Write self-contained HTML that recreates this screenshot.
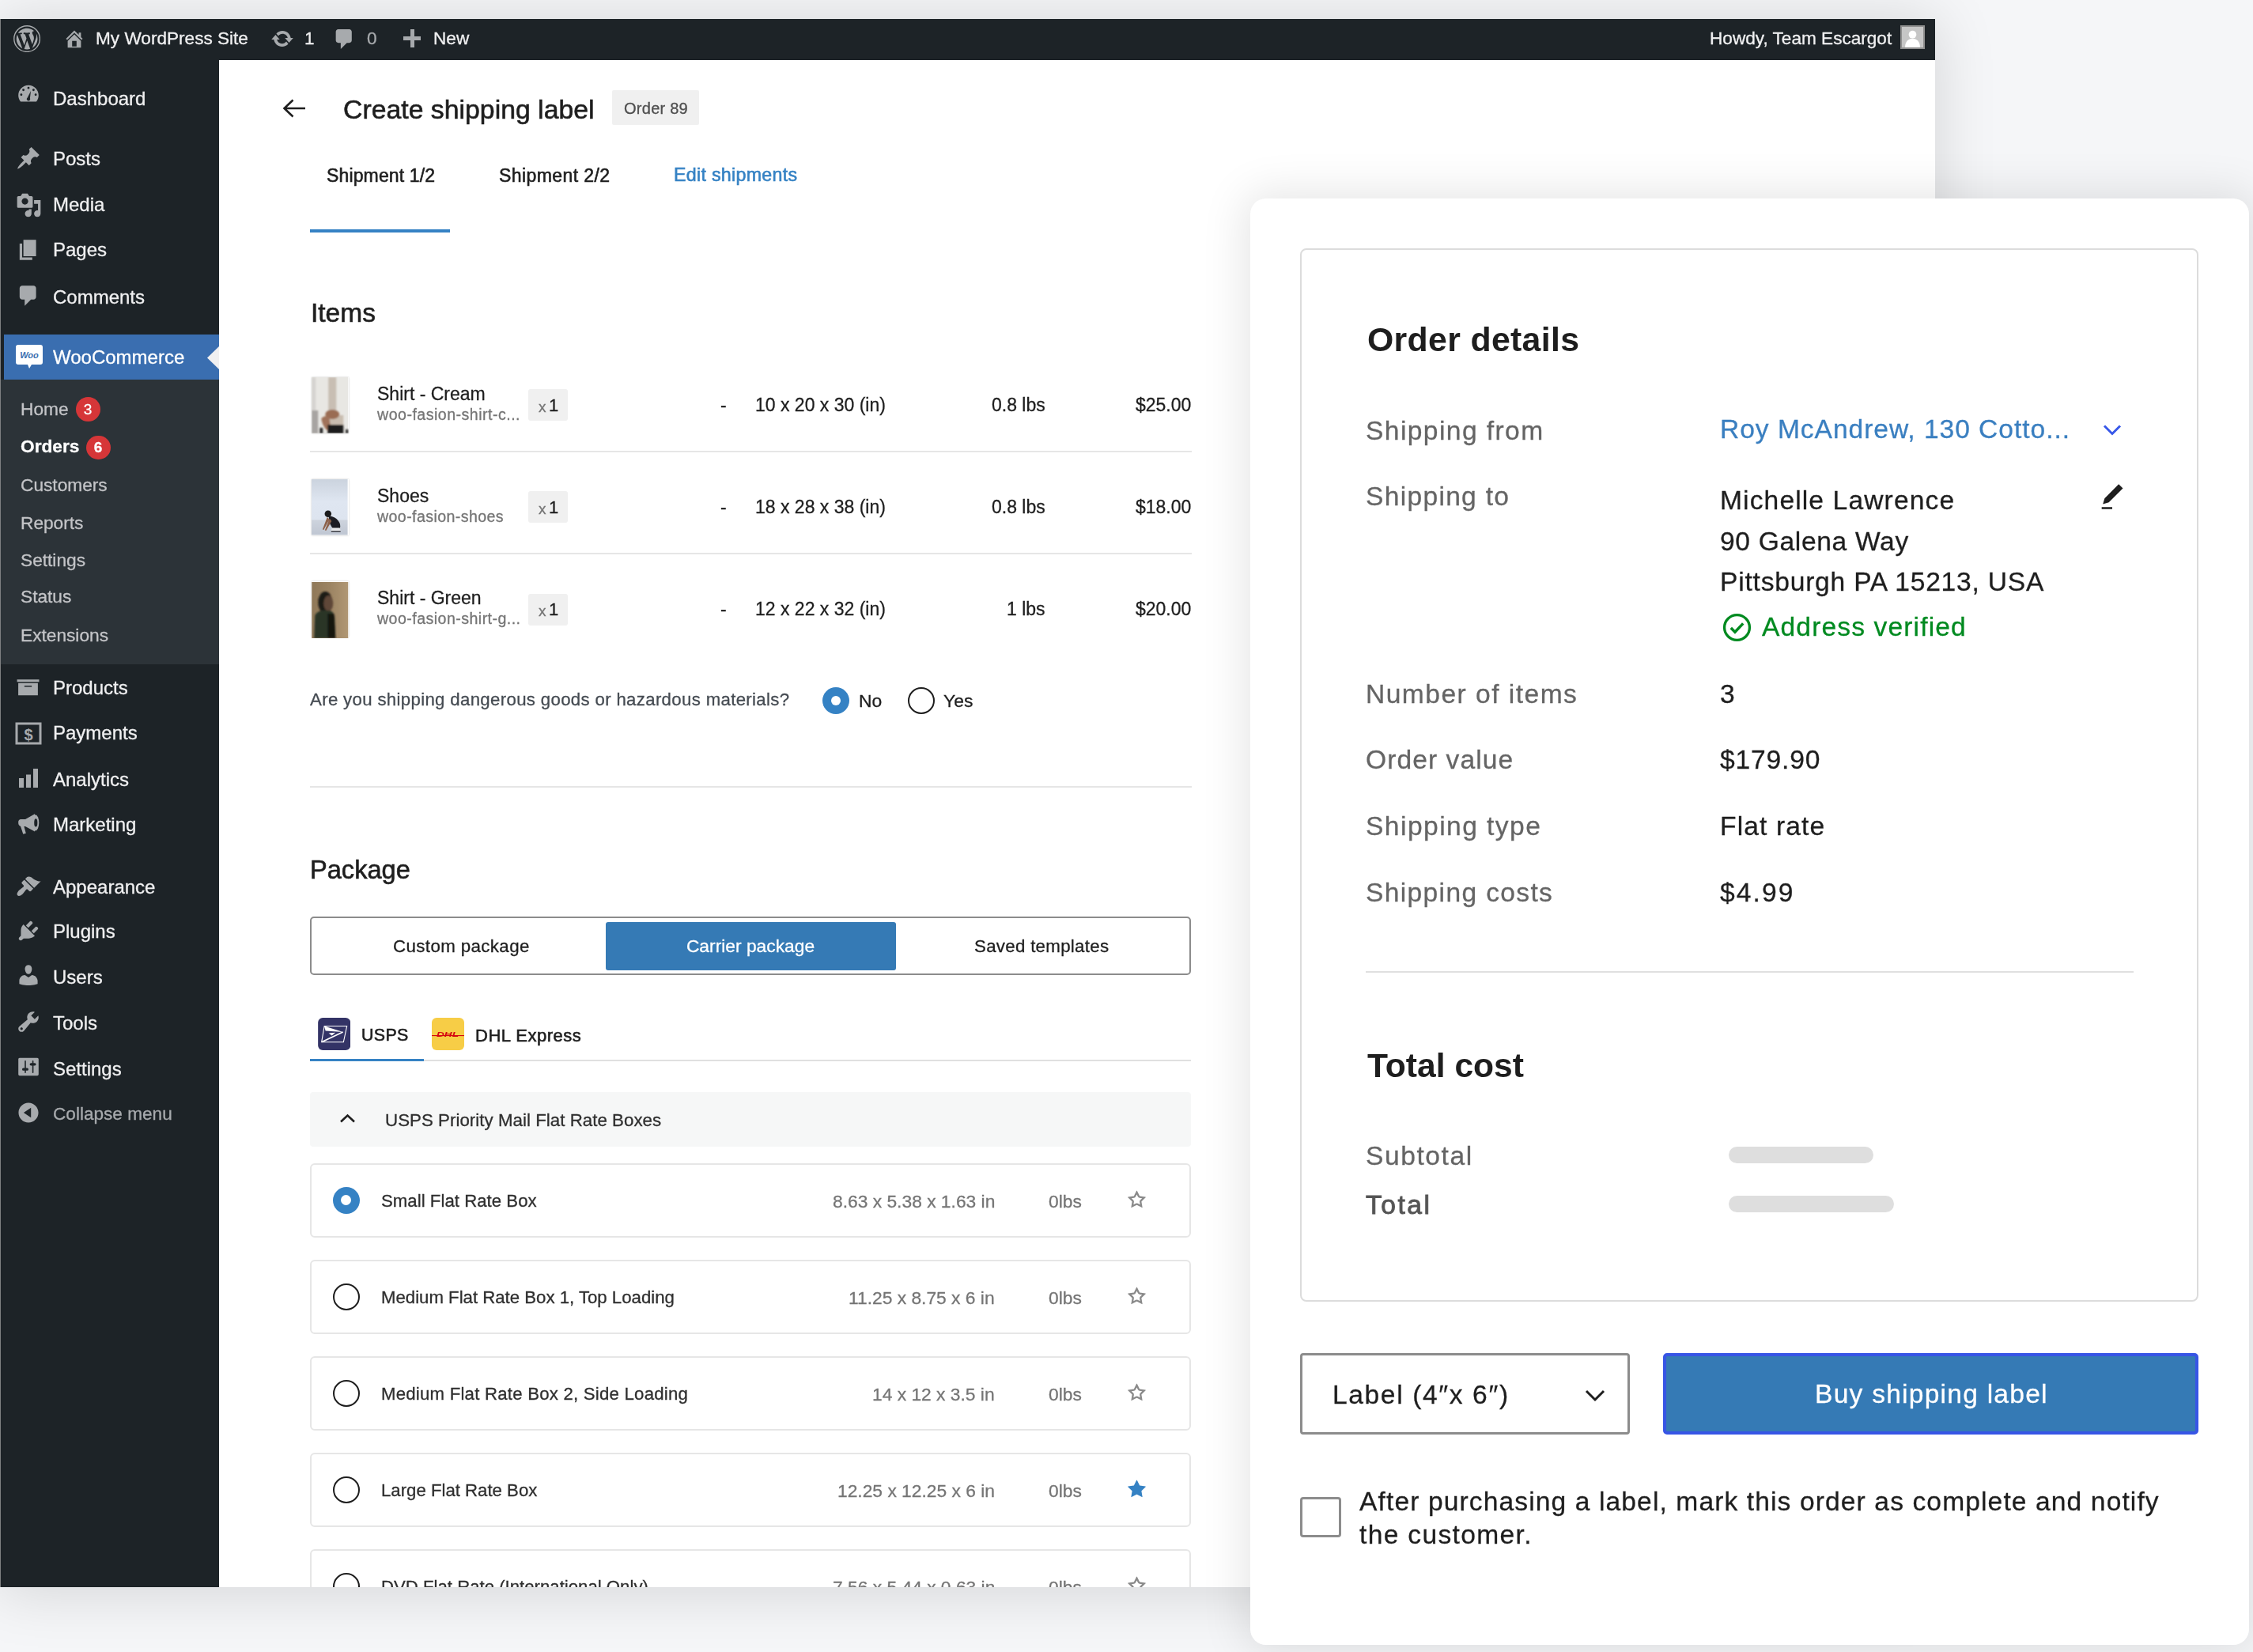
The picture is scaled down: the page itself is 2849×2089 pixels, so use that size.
<!DOCTYPE html>
<html><head><meta charset="utf-8"><title>Create shipping label</title>
<style>
html,body{margin:0;padding:0;}
body{width:2849px;height:2089px;overflow:hidden;position:relative;background:#f5f6f8;font-family:"Liberation Sans",sans-serif;-webkit-font-smoothing:antialiased;}
.r{position:absolute;}
.t{position:absolute;line-height:1;white-space:nowrap;will-change:transform;-webkit-text-stroke:0.3px currentColor;}
.md{-webkit-text-stroke:0.6px currentColor;}
.sb{-webkit-text-stroke:0.9px currentColor;}
.nb{-webkit-text-stroke:0;}
</style></head><body>
<div class="r" style="left:1.0px;top:24.0px;width:2446.0px;height:1983.0px;background:#fff;box-shadow:0 4px 70px 4px rgba(0,0,0,0.13);"></div>
<div class="r" style="left:0.0px;top:24.0px;width:1.0px;height:1983.0px;background:#7d7f80;"></div>
<div class="r" style="left:1.0px;top:24.0px;width:2446.0px;height:52.0px;background:#1d2327;"></div>
<div class="r" style="left:1.0px;top:76.0px;width:276.0px;height:1931.0px;background:#1d2327;"></div>
<svg class="r" style="left:17.0px;top:31.6px;" width="34.2" height="34.2" viewBox="0 0 20 20"><circle cx="10" cy="10" r="9.55" fill="none" stroke="#a7aaad" stroke-width="0.8"/><path transform="translate(10 10) scale(0.88) translate(-10 -10)" d="M7.78 15.37L4.37 6.22c.55-.02 1.17-.08 1.17-.08.5-.06.44-1.13-.06-1.11 0 0-1.45.11-2.37.11-.18 0-.37 0-.58-.01C4.12 2.69 6.87 1.11 10 1.11c2.33 0 4.45.87 6.05 2.34-.68-.11-1.65.39-1.65 1.58 0 .74.45 1.36.9 2.1.35.61.55 1.36.55 2.46 0 1.49-1.4 5-1.4 5l-3.030-8.37c.54-.02.82-.17.82-.17.5-.05.44-1.25-.06-1.22 0 0-1.44.12-2.38.12-.87 0-2.33-.12-2.33-.12-.5-.03-.56 1.2-.06 1.22l.92.08 1.26 3.41zM17.41 10c.24-.64.74-1.87.43-4.25.7 1.29 1.05 2.71 1.05 4.25 0 3.29-1.73 6.24-4.4 7.78.97-2.59 1.94-5.2 2.92-7.78zM6.1 18.09C3.12 16.65 1.11 13.53 1.11 10c0-1.3.23-2.48.72-3.59C3.25 10.3 4.67 14.2 6.1 18.090zm4.03-6.63l2.58 6.98c-.86.29-1.76.45-2.71.45-.79 0-1.57-.11-2.29-.33.81-2.38 1.62-4.74 2.42-7.1z" fill="#a7aaad"/></svg>
<svg class="r" style="left:80.0px;top:35.0px;" width="28" height="28" viewBox="0 0 20 20"><path d="M16 8.5l1.53 1.53-1.06 1.06L10 4.62l-6.47 6.47-1.06-1.06L10 2.5l4 4v-2h2v4zm-6-2.46l6 5.99V18H4v-5.97zM12 17v-5H8v5h4z" fill="#a7aaad"/></svg>
<div class="t " style="top:38.2px;font-size:22.6px;color:#f0f0f1;left:120.5px;">My WordPress Site</div>
<svg class="r" style="left:341.0px;top:34.0px;" width="32" height="30" viewBox="0 0 20 20"><path d="M10.2 3.28c3.53 0 6.43 2.61 6.92 6h2.08l-3.5 4-3.5-4h2.32c-.45-1.97-2.21-3.45-4.32-3.45-1.450 0-2.73.71-3.54 1.78L4.95 5.66C6.23 4.2 8.11 3.28 10.2 3.28zm-.4 13.44c-3.52 0-6.43-2.610-6.92-6H.8l3.5-4c1.17 1.33 2.33 2.67 3.5 4H5.48c.45 1.97 2.21 3.45 4.32 3.45 1.45 0 2.73-.71 3.54-1.78l1.71 1.95c-1.28 1.46-3.15 2.38-5.25 2.38z" fill="#a7aaad"/></svg>
<div class="t " style="top:37.9px;font-size:22.6px;color:#f0f0f1;left:384.5px;">1</div>
<svg class="r" style="left:420.0px;top:34.0px;" width="31" height="31" viewBox="0 0 20 20"><path d="M5 2h9c1.1 0 2 .9 2 2v7c0 1.1-.9 2-2 2h-2l-5 5v-5H5c-1.1 0-2-.9-2-2V4c0-1.1.9-2 2-2z" fill="#a7aaad"/></svg>
<div class="t " style="top:37.9px;font-size:22.6px;color:#a7aaad;left:463.5px;">0</div>
<div class="r" style="left:518.5px;top:37.3px;width:5.0px;height:22.7px;background:#a7aaad;"></div>
<div class="r" style="left:509.5px;top:46.2px;width:22.5px;height:5.0px;background:#a7aaad;"></div>
<div class="t " style="top:37.9px;font-size:22.6px;color:#f0f0f1;left:547.9px;">New</div>
<div class="t " style="top:38.1px;font-size:22.6px;color:#f0f0f1;right:457.0px;">Howdy, Team Escargot</div>
<div class="r" style="left:2402.5px;top:31.6px;width:31.5px;height:30.9px;background:#c6c6c6;box-shadow:inset 0 0 0 2px #8f8f8f;"></div>
<svg class="r" style="left:2405.0px;top:34.0px;" width="27" height="27" viewBox="0 0 20 20"><circle cx="10" cy="7.2" r="3.6" fill="#fff"/><path d="M3 19c0-5 3-8 7-8s7 3 7 8z" fill="#fff"/></svg>
<svg class="r" style="left:20.0px;top:103.0px;" width="32" height="32" viewBox="0 0 20 20"><path fill-rule="evenodd" d="M3.76 16h12.48c1.1-1.37 1.76-3.11 1.76-5 0-4.42-3.58-8-8-8s-8 3.58-8 8c0 1.89.66 3.63 1.76 5zM10 4.2a.9.9 0 1 1 0 1.8a.9.9 0 1 1 0-1.8zM6 5.8a.9.9 0 1 1 0 1.8a.9.9 0 1 1 0-1.8zM14 5.8a.9.9 0 1 1 0 1.8a.9.9 0 1 1 0-1.8zM4.3 9.6a.9.9 0 1 1 0 1.8a.9.9 0 1 1 0-1.8zM15.7 9.6a.9.9 0 1 1 0 1.8a.9.9 0 1 1 0-1.8zM11.9 7.5L11.2 13.2c.3.6.2 1.5-.5 1.9-.8.4-1.7.1-2-.7-.2-.6 0-1.2.5-1.6z" fill="#a7aaad"/></svg>
<div class="t " style="top:113.3px;font-size:24px;color:#f0f0f1;left:67.0px;">Dashboard</div>
<svg class="r" style="left:20.0px;top:184.0px;" width="32" height="32" viewBox="0 0 20 20"><path d="M10.44 3.02l1.82-1.82 6.36 6.35-1.83 1.82c-1.05-.68-2.48-.57-3.41.36l-.75.75c-.92.93-1.04 2.35-.35 3.41l-1.83 1.82-2.41-2.41-2.8 2.79c-.42.42-3.38 2.71-3.8 2.29s1.86-3.39 2.28-3.81l2.79-2.79L4.1 9.36l1.83-1.820c1.05.69 2.48.57 3.4-.36l.75-.75c.93-.92 1.05-2.35.36-3.41z" fill="#a7aaad"/></svg>
<div class="t " style="top:188.5px;font-size:24px;color:#f0f0f1;left:67.0px;">Posts</div>
<svg class="r" style="left:20.0px;top:243.0px;" width="33" height="33" viewBox="0 0 20 20"><path d="M13 11V4c0-.55-.45-1-1-1h-1.67L9 1H5L3.67 3H2c-.55 0-1 .45-1 1v7c0 .55.45 1 1 1h10c.55 0 1-.45 1-1zM7 4.5c1.38 0 2.5 1.12 2.5 2.5S8.38 9.5 7 9.5 4.5 8.38 4.5 7 5.62 4.5 7 4.5zM14 6h5v10.5c0 1.38-1.12 2.5-2.5 2.5S14 17.88 14 16.5s1.12-2.5 2.5-2.5c.17 0 .34.02.5.05V9h-3V6zm-4 8.05V13h2v3.5c0 1.38-1.12 2.5-2.5 2.5S7 17.88 7 16.5 8.12 14 9.5 14c.17 0 .34.02.5.05z" fill="#a7aaad" fill-rule="evenodd"/></svg>
<div class="t " style="top:246.7px;font-size:24px;color:#f0f0f1;left:67.0px;">Media</div>
<svg class="r" style="left:20.0px;top:300.0px;" width="32" height="32" viewBox="0 0 20 20"><path d="M6 15V2h10v13H6zm-1 1h8v2H3V5h2v11z" fill="#a7aaad"/></svg>
<div class="t " style="top:304.4px;font-size:24px;color:#f0f0f1;left:67.0px;">Pages</div>
<svg class="r" style="left:20.0px;top:358.0px;" width="32" height="32" viewBox="0 0 20 20"><path d="M5 2h9c1.1 0 2 .9 2 2v7c0 1.1-.9 2-2 2h-2l-5 5v-5H5c-1.1 0-2-.9-2-2V4c0-1.1.9-2 2-2z" fill="#a7aaad"/></svg>
<div class="t " style="top:363.5px;font-size:24px;color:#f0f0f1;left:67.0px;">Comments</div>
<div class="r" style="left:5.0px;top:423.0px;width:272.0px;height:57.0px;background:#3a6eb0;"></div>
<svg class="r" style="left:262.0px;top:438.0px;" width="15" height="29" viewBox="0 0 15 29"><path d="M15 0L0 14.5 15 29z" fill="#f0f0f1"/></svg>
<svg class="r" style="left:19.0px;top:434.0px;" width="36" height="36" viewBox="0 0 36 36"><path d="M4 2h28a3 3 0 0 1 3 3v19a3 3 0 0 1-3 3H21l-3 5-2-5H4a3 3 0 0 1-3-3V5a3 3 0 0 1 3-3z" fill="#fff"/><text x="18" y="19" font-family="Liberation Sans" font-weight="700" font-style="italic" font-size="11" fill="#3a6eb0" text-anchor="middle">Woo</text></svg>
<div class="t " style="top:439.7px;font-size:24px;color:#ffffff;left:67.0px;">WooCommerce</div>
<div class="r" style="left:1.0px;top:480.0px;width:276.0px;height:360.0px;background:#2c3338;"></div>
<div class="t " style="top:505.6px;font-size:22.7px;color:#c3c4c7;left:26.4px;">Home</div>
<div class="r" style="left:96.0px;top:502.0px;width:30.7px;height:31.0px;background:#d63638;border-radius:16px;"></div>
<div class="t " style="top:508.4px;font-size:19px;color:#fff;left:-888.6px;width:2000px;text-align:center;">3</div>
<div class="t " style="top:553.3px;font-size:22.7px;color:#ffffff;font-weight:700;left:26.4px;">Orders</div>
<div class="r" style="left:109.0px;top:550.7px;width:30.5px;height:30.3px;background:#d63638;border-radius:16px;"></div>
<div class="t " style="top:556.4px;font-size:19px;color:#fff;font-weight:700;left:-875.7px;width:2000px;text-align:center;">6</div>
<div class="t " style="top:601.5px;font-size:22.7px;color:#c3c4c7;left:26.4px;">Customers</div>
<div class="t " style="top:649.8px;font-size:22.7px;color:#c3c4c7;left:26.4px;">Reports</div>
<div class="t " style="top:696.8px;font-size:22.7px;color:#c3c4c7;left:26.4px;">Settings</div>
<div class="t " style="top:743.2px;font-size:22.7px;color:#c3c4c7;left:26.4px;">Status</div>
<div class="t " style="top:791.8px;font-size:22.7px;color:#c3c4c7;left:26.4px;">Extensions</div>
<svg class="r" style="left:20.0px;top:853.0px;" width="31" height="31" viewBox="0 0 20 20"><path d="M19 4v2H1V4h18zM2 7h16v10H2V7zm11 3V9H7v1h6z" fill="#a7aaad"/></svg>
<div class="t " style="top:857.7px;font-size:24px;color:#f0f0f1;left:67.0px;">Products</div>
<svg class="r" style="left:19.0px;top:913.0px;" width="34" height="30" viewBox="0 0 34 30"><rect x="2" y="2" width="30" height="25" fill="none" stroke="#a7aaad" stroke-width="3"/><text x="17" y="23" font-family="Liberation Sans" font-weight="700" font-size="20" fill="#a7aaad" text-anchor="middle">$</text></svg>
<div class="t " style="top:914.7px;font-size:24px;color:#f0f0f1;left:67.0px;">Payments</div>
<svg class="r" style="left:21.0px;top:969.0px;" width="30" height="30" viewBox="0 0 20 20"><path d="M18 18V2h-4v16h4zm-6 0V7H8v11h4zm-6 0v-8H2v8h4z" fill="#a7aaad"/></svg>
<div class="t " style="top:973.7px;font-size:24px;color:#f0f0f1;left:67.0px;">Analytics</div>
<svg class="r" style="left:20.0px;top:1026.0px;" width="32" height="32" viewBox="0 0 20 20"><path d="M2 8.2c0-1.2.8-2 2-2h3.5L15 2v14l-7.5-4.2H6.5l1.5 5.6L5.8 18l-2-6.2C2.8 11.5 2 10.6 2 9.4z" fill="#a7aaad"/><ellipse cx="15.5" cy="9" rx="2.8" ry="6.3" fill="#a7aaad"/><ellipse cx="15.8" cy="9" rx="1.3" ry="3.2" fill="#1d2327"/></svg>
<div class="t " style="top:1031.3px;font-size:24px;color:#f0f0f1;left:67.0px;">Marketing</div>
<svg class="r" style="left:20.0px;top:1105.0px;" width="32" height="32" viewBox="0 0 20 20"><path d="M14.48 11.06L7.41 3.99l1.5-1.5c.5-.56 2.3-.47 3.51.32 1.21.8 1.43 1.28 2.91 2.1 1.18.64 2.45 1.26 4.45.85zm-.71.71L6.7 4.7 4.93 6.47c-.39.39-.39 1.02 0 1.41l1.06 1.06c.39.39.39 1.030 0 1.42-.6.6-1.43 1.11-2.21 1.69-.35.26-.7.53-1.01.84C1.43 14.23.4 16.08 1.4 17.07c.99 1 2.84-.03 4.18-1.36.31-.31.58-.66.85-1.02.57-.78 1.08-1.61 1.69-2.21.39-.39 1.02-.39 1.41 0l1.06 1.06c.39.39 1.02.39 1.41 0z" fill="#a7aaad"/></svg>
<div class="t " style="top:1110.1px;font-size:24px;color:#f0f0f1;left:67.0px;">Appearance</div>
<svg class="r" style="left:20.0px;top:1161.0px;" width="32" height="32" viewBox="0 0 20 20"><path d="M13.11 4.36L9.87 7.6 8 5.73l3.24-3.24c.35-.34 1.05-.2 1.56.32.52.51.66 1.21.31 1.55zm-8 1.77l.91-1.12 9.01 9.01-1.19.84c-.71.71-2.63 1.16-3.82 1.16H6.14L4.9 17.26c-.59.59-1.54.59-2.12 0-.59-.58-.59-1.53 0-2.12l1.24-1.24v-3.88c0-1.13.4-3.19 1.09-3.89zm7.26 3.97l3.24-3.24c.34-.35 1.04-.21 1.55.31.52.51.66 1.21.31 1.55l-3.24 3.25z" fill="#a7aaad"/></svg>
<div class="t " style="top:1166.4px;font-size:24px;color:#f0f0f1;left:67.0px;">Plugins</div>
<svg class="r" style="left:20.0px;top:1217.0px;" width="32" height="32" viewBox="0 0 20 20"><path d="M10 9.25c-2.27 0-2.73-3.44-2.73-3.44C7 4.02 7.82 2 9.970 2c2.16 0 2.98 2.02 2.71 3.81 0 0-.41 3.44-2.68 3.44zm0 2.57L12.72 10c2.39 0 4.52 2.33 4.52 4.53v2.49s-3.65 1.13-7.24 1.13c-3.65 0-7.24-1.13-7.24-1.13v-2.49c0-2.25 1.94-4.48 4.47-4.48z" fill="#a7aaad"/></svg>
<div class="t " style="top:1223.7px;font-size:24px;color:#f0f0f1;left:67.0px;">Users</div>
<svg class="r" style="left:20.0px;top:1276.0px;" width="32" height="32" viewBox="0 0 20 20"><path d="M16.68 9.77c-1.34 1.34-3.3 1.67-4.95.99l-5.41 6.52c-.99.99-2.59.99-3.58 0s-.99-2.59 0-3.57l6.52-5.42c-.68-1.65-.35-3.61.99-4.95 1.28-1.28 3.12-1.62 4.72-1.06l-2.89 2.89 2.82 2.82 2.86-2.87c.53 1.58.18 3.39-1.08 4.65zM3.81 16.21c.4.39 1.04.39 1.43 0 .4-.4.4-1.04 0-1.43-.39-.4-1.03-.4-1.43 0-.39.39-.39 1.03 0 1.43z" fill="#a7aaad"/></svg>
<div class="t " style="top:1282.1px;font-size:24px;color:#f0f0f1;left:67.0px;">Tools</div>
<svg class="r" style="left:20.0px;top:1333.0px;" width="32" height="32" viewBox="0 0 20 20"><path fill-rule="evenodd" d="M18 16V4c0-.55-.45-1-1-1H3c-.55 0-1 .45-1 1v12c0 .55.45 1 1 1h14c.55 0 1-.45 1-1zM8 11h1c.55 0 1 .45 1 1s-.45 1-1 1H8v1.5c0 .28-.22.5-.5.5s-.5-.22-.5-.5V13H6c-.55 0-1-.45-1-1s.45-1 1-1h1V5.5c0-.28.22-.5.5-.5s.5.22.5.5V11zm5-2h-1c-.55 0-1-.45-1-1s.45-1 1-1h1V5.5c0-.28.22-.5.5-.5s.5.22.5.5V7h1c.55 0 1 .45 1 1s-.45 1-1 1h-1v5.5c0 .28-.22.5-.5.5s-.5-.22-.5-.5V9z" fill="#a7aaad"/></svg>
<div class="t " style="top:1340.3px;font-size:24px;color:#f0f0f1;left:67.0px;">Settings</div>
<svg class="r" style="left:20.0px;top:1391.0px;" width="32" height="32" viewBox="0 0 20 20"><path d="M10 2.16c4.33 0 7.84 3.51 7.84 7.84s-3.51 7.84-7.84 7.84S2.16 14.33 2.16 10 5.71 2.16 10 2.16zm2 11.72V6.12L6.18 9.970z" fill="#a7aaad"/></svg>
<div class="t " style="top:1397.9px;font-size:22.6px;color:#a7aaad;left:67.0px;">Collapse menu</div>
<div class="r" style="left:0;top:0;width:2849px;height:2007px;overflow:hidden">
<svg class="r" style="left:350.0px;top:120.0px;" width="40" height="36" viewBox="350 120 40 36"><path d="M386 137H360M370.5 126.5L359.5 137L370.5 147.5" fill="none" stroke="#1e1e1e" stroke-width="2.6"/></svg>
<div class="t md" style="top:122.0px;font-size:33.8px;color:#1e1e1e;left:433.6px;">Create shipping label</div>
<div class="r" style="left:774.0px;top:114.0px;width:110.0px;height:44.0px;background:#f0f0f0;border-radius:2px;"></div>
<div class="t " style="top:127.0px;font-size:20.1px;color:#4f4f4f;letter-spacing:0.214px;left:789.0px;">Order 89</div>
<div class="t md" style="top:210.5px;font-size:23px;color:#1e1e1e;letter-spacing:0.145px;left:413.0px;">Shipment 1/2</div>
<div class="t md" style="top:210.5px;font-size:23px;color:#1e1e1e;letter-spacing:0.409px;left:631.0px;">Shipment 2/2</div>
<div class="t md" style="top:210.4px;font-size:23.2px;color:#3582c4;letter-spacing:0.308px;left:852.0px;">Edit shipments</div>
<div class="r" style="left:392.0px;top:290.0px;width:177.0px;height:3.5px;background:#3582c4;"></div>
<div class="t md" style="top:378.6px;font-size:33.5px;color:#1e1e1e;left:392.8px;">Items</div>
<div class="r" style="left:394.0px;top:476.5px;width:46.5px;height:71.0px;box-shadow:0 0 2px rgba(0,0,0,.22);"></div>
<div class="t " style="top:486.9px;font-size:23px;color:#1e1e1e;left:477.0px;">Shirt - Cream</div>
<div class="t " style="top:515.1px;font-size:19.6px;color:#757575;letter-spacing:0.480px;left:476.5px;">woo-fasion-shirt-c...</div>
<div class="r" style="left:668.0px;top:492.0px;width:50.0px;height:40.0px;background:#f0f0f0;border-radius:3px;"></div>
<div class="t " style="top:504.6px;font-size:19px;color:#757575;left:681.0px;">x</div>
<div class="t " style="top:502.1px;font-size:22px;color:#1e1e1e;left:694.0px;">1</div>
<div class="t " style="top:501.2px;font-size:23px;color:#1e1e1e;left:911.0px;">-</div>
<div class="t " style="top:501.2px;font-size:23px;color:#1e1e1e;right:1729.0px;">10 x 20 x 30 (in)</div>
<div class="t " style="top:501.2px;font-size:23px;color:#1e1e1e;right:1527.4px;">0.8 lbs</div>
<div class="t " style="top:501.2px;font-size:23px;color:#1e1e1e;right:1343.0px;">$25.00</div>
<div class="r" style="left:392.0px;top:570.0px;width:1115.0px;height:2.0px;background:#e6e6e6;"></div>
<div class="r" style="left:394.0px;top:605.8px;width:46.5px;height:71.0px;box-shadow:0 0 2px rgba(0,0,0,.22);"></div>
<div class="t " style="top:615.9px;font-size:23px;color:#1e1e1e;left:477.0px;">Shoes</div>
<div class="t " style="top:644.1px;font-size:19.6px;color:#757575;letter-spacing:0.400px;left:476.5px;">woo-fasion-shoes</div>
<div class="r" style="left:668.0px;top:621.3px;width:50.0px;height:40.0px;background:#f0f0f0;border-radius:3px;"></div>
<div class="t " style="top:633.6px;font-size:19px;color:#757575;left:681.0px;">x</div>
<div class="t " style="top:631.1px;font-size:22px;color:#1e1e1e;left:694.0px;">1</div>
<div class="t " style="top:630.2px;font-size:23px;color:#1e1e1e;left:911.0px;">-</div>
<div class="t " style="top:630.2px;font-size:23px;color:#1e1e1e;right:1729.0px;">18 x 28 x 38 (in)</div>
<div class="t " style="top:630.2px;font-size:23px;color:#1e1e1e;right:1527.4px;">0.8 lbs</div>
<div class="t " style="top:630.2px;font-size:23px;color:#1e1e1e;right:1343.0px;">$18.00</div>
<div class="r" style="left:392.0px;top:698.5px;width:1115.0px;height:2.0px;background:#e6e6e6;"></div>
<div class="r" style="left:394.0px;top:735.1px;width:46.5px;height:71.0px;box-shadow:0 0 2px rgba(0,0,0,.22);"></div>
<div class="t " style="top:744.9px;font-size:23px;color:#1e1e1e;left:477.0px;">Shirt - Green</div>
<div class="t " style="top:773.1px;font-size:19.6px;color:#757575;letter-spacing:0.450px;left:476.5px;">woo-fasion-shirt-g...</div>
<div class="r" style="left:668.0px;top:750.6px;width:50.0px;height:40.0px;background:#f0f0f0;border-radius:3px;"></div>
<div class="t " style="top:762.6px;font-size:19px;color:#757575;left:681.0px;">x</div>
<div class="t " style="top:760.1px;font-size:22px;color:#1e1e1e;left:694.0px;">1</div>
<div class="t " style="top:759.2px;font-size:23px;color:#1e1e1e;left:911.0px;">-</div>
<div class="t " style="top:759.2px;font-size:23px;color:#1e1e1e;right:1729.0px;">12 x 22 x 32 (in)</div>
<div class="t " style="top:759.2px;font-size:23px;color:#1e1e1e;right:1527.4px;">1 lbs</div>
<div class="t " style="top:759.2px;font-size:23px;color:#1e1e1e;right:1343.0px;">$20.00</div>
<svg class="r" style="left:394.0px;top:477.0px;" width="46.5" height="71" viewBox="0 0 46 71"><defs><filter id="bl1" x="-10%" y="-10%" width="120%" height="120%"><feGaussianBlur stdDeviation="1.3"/></filter></defs><rect width="46" height="71" fill="#e8e7e3"/><g filter="url(#bl1)"><rect x="0" y="0" width="5" height="71" fill="#d5d3d0"/><rect x="0" y="42" width="8" height="29" fill="#a7a4a2"/><rect x="21" y="0" width="10" height="46" fill="#c8beb3"/><rect x="20" y="48" width="20" height="14" fill="#c9bdb0"/><ellipse cx="26" cy="47" rx="9" ry="6" fill="#9a6c52"/><path d="M12 52q5-5 10-2l2 14-5 3q-6-6-7-15z" fill="#a0725a"/><rect x="20" y="60" width="20" height="11" fill="#1d1b1b"/><rect x="10" y="64" width="4" height="7" fill="#2a2826"/><rect x="43" y="66" width="3" height="5" fill="#222"/></g></svg>
<svg class="r" style="left:394.4px;top:606.0px;" width="45.6" height="70.5" viewBox="0 0 46 71"><defs><filter id="bl2" x="-5%" y="-5%" width="110%" height="110%"><feGaussianBlur stdDeviation="0.6"/></filter><linearGradient id="sg" x1="0" y1="0" x2="0" y2="1"><stop offset="0" stop-color="#cbd3de"/><stop offset="0.4" stop-color="#dfe6f1"/><stop offset="0.72" stop-color="#dde4ef"/><stop offset="0.74" stop-color="#cdd3dd"/><stop offset="1" stop-color="#bfc6d2"/></linearGradient></defs><rect width="46" height="71" fill="url(#sg)"/><g filter="url(#bl2)"><circle cx="21" cy="44" r="4.3" fill="#1b1b1d"/><path d="M22 47q8 0 12 6 4 5 2 10l-9 0q-3-5-5-9z" fill="#1e1f22"/><path d="M20 48l-6 16 1.5.5 7-13zM23 50l-6 15 1.5.5 7-12z" fill="#8c6148"/><path d="M26 62h10l1 4h-12z" fill="#e8e8ea"/><path d="M25 66h12v1.5h-12z" fill="#3a3d44"/></g></svg>
<svg class="r" style="left:394.0px;top:735.5px;" width="46.5" height="71" viewBox="0 0 46 71"><defs><filter id="bl3" x="-5%" y="-5%" width="110%" height="110%"><feGaussianBlur stdDeviation="0.9"/></filter><linearGradient id="gg" x1="0" y1="0" x2="1" y2="0"><stop offset="0" stop-color="#8f7858"/><stop offset="0.5" stop-color="#9c8463"/><stop offset="1" stop-color="#b09774"/></linearGradient></defs><rect width="46" height="71" fill="url(#gg)"/><g filter="url(#bl3)"><ellipse cx="17" cy="26" rx="9" ry="14" fill="#1f1b17"/><ellipse cx="21" cy="27" rx="6" ry="10" fill="#5e4638"/><path d="M3 71L4 42q3-5 9-6l10 0q5 2 6 8l1 27z" fill="#2b3427"/><path d="M20 40l8 0 2 31h-10z" fill="#121311"/></g></svg>
<div class="t " style="top:874.2px;font-size:22.2px;color:#454b52;letter-spacing:0.345px;left:392.0px;">Are you shipping dangerous goods or hazardous materials?</div>
<div class="r" style="left:1040.0px;top:868.5px;width:34.0px;height:34.0px;border-radius:50%;background:#3582c4;"></div>
<div class="r" style="left:1051.0px;top:879.5px;width:12.0px;height:12.0px;border-radius:50%;background:#fff;"></div>
<div class="t " style="top:874.6px;font-size:22.9px;color:#1e1e1e;left:1085.6px;">No</div>
<div class="r" style="left:1147.6px;top:868.5px;width:34.0px;height:34.0px;border-radius:50%;box-sizing:border-box;border:2px solid #1e1e1e;"></div>
<div class="t " style="top:874.6px;font-size:22.9px;color:#1e1e1e;left:1192.6px;">Yes</div>
<div class="r" style="left:392.0px;top:994.0px;width:1115.0px;height:2.0px;background:#e6e6e6;"></div>
<div class="t md" style="top:1083.9px;font-size:32.6px;color:#1e1e1e;left:392.0px;">Package</div>
<div class="r" style="left:392.4px;top:1159.3px;width:1113.6px;height:73.4px;box-sizing:border-box;border:2px solid #8c8c8c;border-radius:5px;"></div>
<div class="r" style="left:765.8px;top:1165.6px;width:367.2px;height:61.1px;background:#357ab5;border-radius:3px;"></div>
<div class="t " style="top:1185.8px;font-size:22.3px;color:#1e1e1e;letter-spacing:0.385px;left:496.5px;">Custom package</div>
<div class="t " style="top:1185.4px;font-size:22.8px;color:#ffffff;left:-50.6px;width:2000px;text-align:center;">Carrier package</div>
<div class="t " style="top:1185.8px;font-size:22.3px;color:#1e1e1e;letter-spacing:0.286px;left:1231.5px;">Saved templates</div>
<svg class="r" style="left:402.0px;top:1287.0px;" width="41.3" height="41" viewBox="0 0 41 41"><rect width="41" height="41" rx="6" fill="#333366"/><path d="M8 10.5H36.5L32.2 30.8H4.5z" fill="none" stroke="#fff" stroke-width="1.1"/><path d="M8 10.5L31.5 18L9.5 16.5z" fill="#fff"/><path d="M31.5 18L5 30.5" stroke="#fff" stroke-width="1.8"/><path d="M13.5 19.5L22 18.8L17.5 22.5z" fill="#fff"/></svg>
<div class="t md" style="top:1299.2px;font-size:21.4px;color:#1e1e1e;letter-spacing:0.333px;left:457.0px;">USPS</div>
<svg class="r" style="left:545.6px;top:1287.0px;" width="41" height="41" viewBox="0 0 41 41"><rect width="41" height="41" rx="6" fill="#f7cd46"/><rect x="0" y="22" width="41" height="1.1" fill="#d40511"/><text x="20" y="24.3" font-family="Liberation Sans" font-weight="700" font-style="italic" font-size="9.5" fill="#d40511" text-anchor="middle" textLength="28" lengthAdjust="spacingAndGlyphs">DHL</text></svg>
<div class="t md" style="top:1298.7px;font-size:22px;color:#1e1e1e;letter-spacing:0.500px;left:601.0px;">DHL Express</div>
<div class="r" style="left:392.0px;top:1339.5px;width:1114.0px;height:2.0px;background:#e0e0e0;"></div>
<div class="r" style="left:392.0px;top:1338.5px;width:143.5px;height:3.5px;background:#3582c4;"></div>
<div class="r" style="left:392.0px;top:1381.0px;width:1114.0px;height:69.0px;background:#f6f7f7;border-radius:4px;"></div>
<svg class="r" style="left:425.0px;top:1400.0px;" width="30" height="28" viewBox="425 1400 30 28"><polyline points="431,1418.5 439.5,1410.5 448,1418.5" fill="none" stroke="#1e1e1e" stroke-width="2.6"/></svg>
<div class="t " style="top:1406.1px;font-size:22.3px;color:#2f2f2f;letter-spacing:0.030px;left:487.0px;">USPS Priority Mail Flat Rate Boxes</div>
<div class="r" style="left:392.0px;top:1471.0px;width:1114.0px;height:93.5px;box-sizing:border-box;border:2px solid #e6e6e6;border-radius:6px;background:#fff;"></div>
<div class="r" style="left:420.7px;top:1500.8px;width:34.0px;height:34.0px;border-radius:50%;background:#3582c4;"></div>
<div class="r" style="left:431.2px;top:1511.3px;width:13.0px;height:13.0px;border-radius:50%;background:#fff;"></div>
<div class="t " style="top:1507.5px;font-size:22.2px;color:#2f2f2f;letter-spacing:0.033px;left:482.0px;">Small Flat Rate Box</div>
<div class="t " style="top:1507.7px;font-size:22.8px;color:#757575;right:1591.0px;">8.63 x 5.38 x 1.63 in</div>
<div class="t " style="top:1507.7px;font-size:22.8px;color:#757575;left:1326.0px;">0lbs</div>
<svg class="r" style="left:1419.0px;top:1498.8px;" width="37" height="37" viewBox="0 0 24 24"><path fill-rule="evenodd" d="M9.706 8.646a.25.25 0 01-.188.137l-4.626.672a.25.25 0 00-.139.427l3.348 3.262a.25.25 0 01.072.222l-.79 4.607a.25.25 0 00.362.264l4.138-2.176a.25.25 0 01.233 0l4.137 2.175a.25.25 0 00.363-.263l-.79-4.607a.25.25 0 01.072-.222l3.347-3.262a.25.25 0 00-.139-.427l-4.626-.672a.25.25 0 01-.188-.137l-2.069-4.192a.25.25 0 00-.448 0L9.706 8.646zM12 7.39l-.948 1.921a1.75 1.75 0 01-1.317.957l-2.12.308 1.534 1.495c.412.402.6.982.503 1.55l-.362 2.11 1.896-.997a1.75 1.75 0 011.629 0l1.895.997-.362-2.11a1.75 1.75 0 01.504-1.55l1.533-1.495-2.12-.308a1.75 1.75 0 01-1.317-.957L12 7.39z" fill="#8a8a8a"/></svg>
<div class="r" style="left:392.0px;top:1593.0px;width:1114.0px;height:93.5px;box-sizing:border-box;border:2px solid #e6e6e6;border-radius:6px;background:#fff;"></div>
<div class="r" style="left:420.7px;top:1622.8px;width:34.0px;height:34.0px;border-radius:50%;box-sizing:border-box;border:2px solid #1e1e1e;"></div>
<div class="t " style="top:1629.5px;font-size:22.2px;color:#2f2f2f;left:482.0px;">Medium Flat Rate Box 1, Top Loading</div>
<div class="t " style="top:1629.7px;font-size:22.8px;color:#757575;right:1591.0px;">11.25 x 8.75 x 6 in</div>
<div class="t " style="top:1629.7px;font-size:22.8px;color:#757575;left:1326.0px;">0lbs</div>
<svg class="r" style="left:1419.0px;top:1620.8px;" width="37" height="37" viewBox="0 0 24 24"><path fill-rule="evenodd" d="M9.706 8.646a.25.25 0 01-.188.137l-4.626.672a.25.25 0 00-.139.427l3.348 3.262a.25.25 0 01.072.222l-.79 4.607a.25.25 0 00.362.264l4.138-2.176a.25.25 0 01.233 0l4.137 2.175a.25.25 0 00.363-.263l-.79-4.607a.25.25 0 01.072-.222l3.347-3.262a.25.25 0 00-.139-.427l-4.626-.672a.25.25 0 01-.188-.137l-2.069-4.192a.25.25 0 00-.448 0L9.706 8.646zM12 7.39l-.948 1.921a1.75 1.75 0 01-1.317.957l-2.12.308 1.534 1.495c.412.402.6.982.503 1.55l-.362 2.11 1.896-.997a1.75 1.75 0 011.629 0l1.895.997-.362-2.11a1.75 1.75 0 01.504-1.55l1.533-1.495-2.12-.308a1.75 1.75 0 01-1.317-.957L12 7.39z" fill="#8a8a8a"/></svg>
<div class="r" style="left:392.0px;top:1715.0px;width:1114.0px;height:93.5px;box-sizing:border-box;border:2px solid #e6e6e6;border-radius:6px;background:#fff;"></div>
<div class="r" style="left:420.7px;top:1744.8px;width:34.0px;height:34.0px;border-radius:50%;box-sizing:border-box;border:2px solid #1e1e1e;"></div>
<div class="t " style="top:1751.5px;font-size:22.2px;color:#2f2f2f;letter-spacing:0.229px;left:482.0px;">Medium Flat Rate Box 2, Side Loading</div>
<div class="t " style="top:1751.7px;font-size:22.8px;color:#757575;right:1591.0px;">14 x 12 x 3.5 in</div>
<div class="t " style="top:1751.7px;font-size:22.8px;color:#757575;left:1326.0px;">0lbs</div>
<svg class="r" style="left:1419.0px;top:1742.8px;" width="37" height="37" viewBox="0 0 24 24"><path fill-rule="evenodd" d="M9.706 8.646a.25.25 0 01-.188.137l-4.626.672a.25.25 0 00-.139.427l3.348 3.262a.25.25 0 01.072.222l-.79 4.607a.25.25 0 00.362.264l4.138-2.176a.25.25 0 01.233 0l4.137 2.175a.25.25 0 00.363-.263l-.79-4.607a.25.25 0 01.072-.222l3.347-3.262a.25.25 0 00-.139-.427l-4.626-.672a.25.25 0 01-.188-.137l-2.069-4.192a.25.25 0 00-.448 0L9.706 8.646zM12 7.39l-.948 1.921a1.75 1.75 0 01-1.317.957l-2.12.308 1.534 1.495c.412.402.6.982.503 1.55l-.362 2.11 1.896-.997a1.75 1.75 0 011.629 0l1.895.997-.362-2.11a1.75 1.75 0 01.504-1.55l1.533-1.495-2.12-.308a1.75 1.75 0 01-1.317-.957L12 7.39z" fill="#8a8a8a"/></svg>
<div class="r" style="left:392.0px;top:1837.0px;width:1114.0px;height:93.5px;box-sizing:border-box;border:2px solid #e6e6e6;border-radius:6px;background:#fff;"></div>
<div class="r" style="left:420.7px;top:1866.8px;width:34.0px;height:34.0px;border-radius:50%;box-sizing:border-box;border:2px solid #1e1e1e;"></div>
<div class="t " style="top:1873.5px;font-size:22.2px;color:#2f2f2f;left:482.0px;">Large Flat Rate Box</div>
<div class="t " style="top:1873.7px;font-size:22.8px;color:#757575;right:1591.0px;">12.25 x 12.25 x 6 in</div>
<div class="t " style="top:1873.7px;font-size:22.8px;color:#757575;left:1326.0px;">0lbs</div>
<svg class="r" style="left:1419.0px;top:1864.8px;" width="37" height="37" viewBox="0 0 24 24"><path fill-rule="evenodd" d="M11.776 4.454a.25.25 0 01.448 0l2.069 4.192a.25.25 0 00.188.137l4.626.672a.25.25 0 01.139.426l-3.348 3.263a.25.25 0 00-.072.222l.79 4.607a.25.25 0 01-.362.263l-4.138-2.175a.25.25 0 00-.232 0l-4.138 2.175a.25.25 0 01-.363-.263l.79-4.607a.25.25 0 00-.071-.222L4.754 9.881a.25.25 0 01.139-.426l4.626-.672a.25.25 0 00.188-.137l2.069-4.192z" fill="#3582c4"/></svg>
<div class="r" style="left:392.0px;top:1959.0px;width:1114.0px;height:93.5px;box-sizing:border-box;border:2px solid #e6e6e6;border-radius:6px;background:#fff;"></div>
<div class="r" style="left:420.7px;top:1988.8px;width:34.0px;height:34.0px;border-radius:50%;box-sizing:border-box;border:2px solid #1e1e1e;"></div>
<div class="t " style="top:1995.5px;font-size:22.2px;color:#2f2f2f;left:482.0px;">DVD Flat Rate (International Only)</div>
<div class="t " style="top:1995.7px;font-size:22.8px;color:#757575;right:1591.0px;">7.56 x 5.44 x 0.63 in</div>
<div class="t " style="top:1995.7px;font-size:22.8px;color:#757575;left:1326.0px;">0lbs</div>
<svg class="r" style="left:1419.0px;top:1986.8px;" width="37" height="37" viewBox="0 0 24 24"><path fill-rule="evenodd" d="M9.706 8.646a.25.25 0 01-.188.137l-4.626.672a.25.25 0 00-.139.427l3.348 3.262a.25.25 0 01.072.222l-.79 4.607a.25.25 0 00.362.264l4.138-2.176a.25.25 0 01.233 0l4.137 2.175a.25.25 0 00.363-.263l-.79-4.607a.25.25 0 01.072-.222l3.347-3.262a.25.25 0 00-.139-.427l-4.626-.672a.25.25 0 01-.188-.137l-2.069-4.192a.25.25 0 00-.448 0L9.706 8.646zM12 7.39l-.948 1.921a1.75 1.75 0 01-1.317.957l-2.12.308 1.534 1.495c.412.402.6.982.503 1.55l-.362 2.11 1.896-.997a1.75 1.75 0 011.629 0l1.895.997-.362-2.11a1.75 1.75 0 01.504-1.55l1.533-1.495-2.12-.308a1.75 1.75 0 01-1.317-.957L12 7.39z" fill="#8a8a8a"/></svg>
<div class="r" style="left:277.0px;top:2007.0px;width:1304.0px;height:82.0px;background:transparent;"></div>
</div>
<div class="r" style="left:1581.0px;top:251.0px;width:1263.0px;height:1829.0px;background:#fff;border-radius:20px;box-shadow:0 0 55px 8px rgba(0,0,0,0.10);"></div>
<div class="r" style="left:1644.0px;top:314.0px;width:1136.0px;height:1332.0px;box-sizing:border-box;border:2px solid #dcdcdc;border-radius:8px;"></div>
<div class="t nb" style="top:408.3px;font-size:42.8px;color:#1e1e1e;font-weight:700;letter-spacing:0.333px;left:1729.0px;">Order details</div>
<div class="t " style="top:527.6px;font-size:33.6px;color:#656565;letter-spacing:1.417px;left:1727.0px;">Shipping from</div>
<div class="t " style="top:526.1px;font-size:33.6px;color:#3a7fc0;letter-spacing:0.960px;left:2175.0px;">Roy McAndrew, 130 Cotto...</div>
<svg class="r" style="left:2650.0px;top:525.0px;" width="40" height="35" viewBox="2650 525 40 35"><polyline points="2661,538.5 2671,548.5 2681,538.5" fill="none" stroke="#3858e9" stroke-width="3"/></svg>
<div class="t " style="top:610.6px;font-size:33.6px;color:#656565;letter-spacing:1.300px;left:1727.0px;">Shipping to</div>
<div class="t " style="top:615.6px;font-size:33.6px;color:#1e1e1e;letter-spacing:1.125px;left:2175.0px;">Michelle Lawrence</div>
<div class="t " style="top:667.6px;font-size:33.6px;color:#1e1e1e;letter-spacing:0.667px;left:2175.0px;">90 Galena Way</div>
<div class="t " style="top:719.2px;font-size:33.6px;color:#1e1e1e;letter-spacing:0.783px;left:2175.0px;">Pittsburgh PA 15213, USA</div>
<svg class="r" style="left:2651.0px;top:609.0px;" width="40" height="40" viewBox="0 0 24 24"><path d="M20.1 5.1L16.9 2 6.2 12.7l-1.3 4.4 4.5-1.3L20.1 5.1zM4 20.8h8v-1.5H4v1.5z" fill="#1e1e1e"/></svg>
<svg class="r" style="left:2178.0px;top:775.0px;" width="37" height="37" viewBox="0 0 36 36"><circle cx="18" cy="18" r="15.5" fill="none" stroke="#008a20" stroke-width="3.2"/><path d="M10.5 18.5l5 5 10-10.5" fill="none" stroke="#008a20" stroke-width="3.4"/></svg>
<div class="t " style="top:775.6px;font-size:33.6px;color:#008a20;letter-spacing:1.133px;left:2228.0px;">Address verified</div>
<div class="t " style="top:860.6px;font-size:33.6px;color:#656565;letter-spacing:1.471px;left:1727.0px;">Number of items</div>
<div class="t " style="top:860.6px;font-size:33.6px;color:#1e1e1e;letter-spacing:3.000px;left:2175.0px;">3</div>
<div class="t " style="top:943.6px;font-size:33.6px;color:#656565;letter-spacing:1.070px;left:1727.0px;">Order value</div>
<div class="t " style="top:943.6px;font-size:33.6px;color:#1e1e1e;letter-spacing:0.833px;left:2175.0px;">$179.90</div>
<div class="t " style="top:1027.6px;font-size:33.6px;color:#656565;letter-spacing:1.450px;left:1727.0px;">Shipping type</div>
<div class="t " style="top:1027.6px;font-size:33.6px;color:#1e1e1e;letter-spacing:1.125px;left:2175.0px;">Flat rate</div>
<div class="t " style="top:1111.6px;font-size:33.6px;color:#656565;letter-spacing:1.346px;left:1727.0px;">Shipping costs</div>
<div class="t " style="top:1111.6px;font-size:33.6px;color:#1e1e1e;letter-spacing:2.125px;left:2175.0px;">$4.99</div>
<div class="r" style="left:1727.0px;top:1228.0px;width:971.0px;height:2.0px;background:#e0e0e0;"></div>
<div class="t nb" style="top:1325.9px;font-size:42.6px;color:#1e1e1e;font-weight:700;letter-spacing:0.000px;left:1728.6px;">Total cost</div>
<div class="t " style="top:1445.4px;font-size:33.6px;color:#656565;letter-spacing:1.571px;left:1727.0px;">Subtotal</div>
<div class="t sb" style="top:1507.3px;font-size:33.6px;color:#555555;letter-spacing:2.500px;left:1727.0px;">Total</div>
<div class="r" style="left:2186.0px;top:1450.0px;width:183.0px;height:21.0px;background:#dedede;border-radius:11px;"></div>
<div class="r" style="left:2186.0px;top:1512.0px;width:209.0px;height:21.0px;background:#dedede;border-radius:11px;"></div>
<div class="r" style="left:1644.0px;top:1711.0px;width:417.0px;height:103.0px;box-sizing:border-box;border:3px solid #8c8c8c;border-radius:4px;"></div>
<div class="t " style="top:1747.1px;font-size:33.6px;color:#1e1e1e;letter-spacing:1.615px;left:1685.0px;">Label (4″x 6″)</div>
<svg class="r" style="left:1995.0px;top:1745.0px;" width="40" height="35" viewBox="1995 1745 40 35"><polyline points="2006,1759 2017,1770 2028,1759" fill="none" stroke="#1e1e1e" stroke-width="3"/></svg>
<div class="r" style="left:2102.5px;top:1710.5px;width:677.5px;height:103.5px;box-sizing:border-box;background:#357ab5;border:4px solid #3755e5;border-radius:5px;"></div>
<div class="t " style="top:1746.1px;font-size:33.6px;color:#ffffff;letter-spacing:1.235px;left:2295.0px;">Buy shipping label</div>
<div class="r" style="left:1644.0px;top:1893.0px;width:52.0px;height:51.0px;box-sizing:border-box;border:3px solid #8c8c8c;border-radius:4px;"></div>
<div class="t " style="top:1882.4px;font-size:33.6px;color:#1e1e1e;letter-spacing:1.111px;left:1718.5px;">After purchasing a label, mark this order as complete and notify</div>
<div class="t " style="top:1924.0px;font-size:33.6px;color:#1e1e1e;letter-spacing:1.333px;left:1718.5px;">the customer.</div>
</body></html>
